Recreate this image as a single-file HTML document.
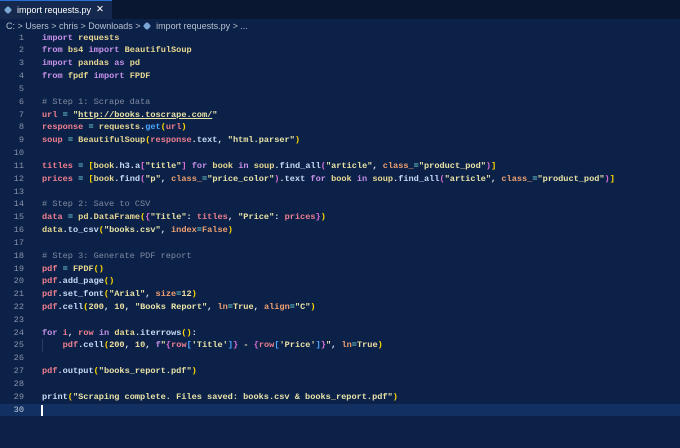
<!DOCTYPE html>
<html><head><meta charset="utf-8"><style>
*{margin:0;padding:0;box-sizing:border-box}
body{width:680px;height:448px;background:#0c2148;overflow:hidden;font-family:"Liberation Sans",sans-serif;position:relative}
.tabbar{position:absolute;left:0;top:0;width:680px;height:19px;background:#0a1730}
.tab{position:absolute;left:0;top:0;width:112px;height:19px;background:#15284d;color:#fff;font-size:9px;line-height:18px;padding-left:17px;border-top:1px solid #2a6fd6;white-space:nowrap}
.tab .x{position:absolute;left:96px;top:0;font-size:9.5px}
.dot{position:absolute;width:6px;height:6px;background:#7aa6d6;transform:rotate(45deg);border-radius:2px}
.idot{display:inline-block;width:6px;height:6px;background:#7aa6d6;transform:rotate(45deg);border-radius:2px;margin:0 4px 0 3px;vertical-align:0px}
.crumb{position:absolute;left:6px;top:19px;height:15px;line-height:15px;font-size:9px;color:#b7c0d0;white-space:pre}
.code{position:absolute;left:0;top:31.6px;width:680px;font-family:"Liberation Mono",monospace;font-size:8.6px;font-weight:bold}
.l{height:12.83px;line-height:12.83px;white-space:pre;position:relative}
.n{position:absolute;left:0;width:24px;text-align:right;color:#8892a8;font-weight:normal}
.t{position:absolute;left:42px;color:#e8eaf0}
.cur{background:#123062}
.k{color:#c792ea}.v{color:#f07f8e}.c{color:#e8d892}.s{color:#e9e3a8}.o{color:#6fd0d0}.m{color:#c7dcf7}
.p{color:#f0a070}.g{color:#7f8aa0;font-weight:normal}.y{color:#ffd700}.q{color:#da70d6}.b{color:#4aa8ff}.nu{color:#f0e0a0}.u{text-decoration:underline}
</style></head><body>
<div class="tabbar"><div class="tab"><span class="dot" style="left:5px;top:6px"></span>import requests.py<span class="x">✕</span></div></div>
<div class="crumb">C: &gt; Users &gt; chris &gt; Downloads &gt;<span class="idot"></span> import requests.py &gt; ...</div>
<div class="code">
<div class="l"><span class="n">1</span><span class="t"><span class="k">import</span> <span class="c">requests</span></span></div>
<div class="l"><span class="n">2</span><span class="t"><span class="k">from</span> <span class="c">bs4</span> <span class="k">import</span> <span class="c">BeautifulSoup</span></span></div>
<div class="l"><span class="n">3</span><span class="t"><span class="k">import</span> <span class="c">pandas</span> <span class="k">as</span> <span class="c">pd</span></span></div>
<div class="l"><span class="n">4</span><span class="t"><span class="k">from</span> <span class="c">fpdf</span> <span class="k">import</span> <span class="c">FPDF</span></span></div>
<div class="l"><span class="n">5</span></div>
<div class="l"><span class="n">6</span><span class="t g"># Step 1: Scrape data</span></div>
<div class="l"><span class="n">7</span><span class="t"><span class="v">url</span> <span class="o">=</span> <span class="s">"<span class="u">http://books.toscrape.com/</span>"</span></span></div>
<div class="l"><span class="n">8</span><span class="t"><span class="v">response</span> <span class="o">=</span> <span class="c">requests</span>.<span class="b">get</span><span class="y">(</span><span class="v">url</span><span class="y">)</span></span></div>
<div class="l"><span class="n">9</span><span class="t"><span class="v">soup</span> <span class="o">=</span> <span class="c">BeautifulSoup</span><span class="y">(</span><span class="v">response</span>.<span class="m">text</span>, <span class="s">"html.parser"</span><span class="y">)</span></span></div>
<div class="l"><span class="n">10</span></div>
<div class="l"><span class="n">11</span><span class="t"><span class="v">titles</span> <span class="o">=</span> <span class="y">[</span><span class="c">book</span>.<span class="m">h3</span>.<span class="m">a</span><span class="q">[</span><span class="s">"title"</span><span class="q">]</span> <span class="k">for</span> <span class="c">book</span> <span class="k">in</span> <span class="c">soup</span>.<span class="m">find_all</span><span class="q">(</span><span class="s">"article"</span>, <span class="p">class_</span><span class="o">=</span><span class="s">"product_pod"</span><span class="q">)</span><span class="y">]</span></span></div>
<div class="l"><span class="n">12</span><span class="t"><span class="v">prices</span> <span class="o">=</span> <span class="y">[</span><span class="c">book</span>.<span class="m">find</span><span class="q">(</span><span class="s">"p"</span>, <span class="p">class_</span><span class="o">=</span><span class="s">"price_color"</span><span class="q">)</span>.<span class="m">text</span> <span class="k">for</span> <span class="c">book</span> <span class="k">in</span> <span class="c">soup</span>.<span class="m">find_all</span><span class="q">(</span><span class="s">"article"</span>, <span class="p">class_</span><span class="o">=</span><span class="s">"product_pod"</span><span class="q">)</span><span class="y">]</span></span></div>
<div class="l"><span class="n">13</span></div>
<div class="l"><span class="n">14</span><span class="t g"># Step 2: Save to CSV</span></div>
<div class="l"><span class="n">15</span><span class="t"><span class="v">data</span> <span class="o">=</span> <span class="c">pd</span>.<span class="c">DataFrame</span><span class="y">(</span><span class="q">{</span><span class="s">"Title"</span>: <span class="v">titles</span>, <span class="s">"Price"</span>: <span class="v">prices</span><span class="q">}</span><span class="y">)</span></span></div>
<div class="l"><span class="n">16</span><span class="t"><span class="c">data</span>.<span class="m">to_csv</span><span class="y">(</span><span class="s">"books.csv"</span>, <span class="p">index</span><span class="o">=</span><span class="p">False</span><span class="y">)</span></span></div>
<div class="l"><span class="n">17</span></div>
<div class="l"><span class="n">18</span><span class="t g"># Step 3: Generate PDF report</span></div>
<div class="l"><span class="n">19</span><span class="t"><span class="v">pdf</span> <span class="o">=</span> <span class="c">FPDF</span><span class="y">()</span></span></div>
<div class="l"><span class="n">20</span><span class="t"><span class="v">pdf</span>.<span class="m">add_page</span><span class="y">()</span></span></div>
<div class="l"><span class="n">21</span><span class="t"><span class="v">pdf</span>.<span class="m">set_font</span><span class="y">(</span><span class="s">"Arial"</span>, <span class="p">size</span><span class="o">=</span><span class="nu">12</span><span class="y">)</span></span></div>
<div class="l"><span class="n">22</span><span class="t"><span class="v">pdf</span>.<span class="m">cell</span><span class="y">(</span><span class="nu">200</span>, <span class="nu">10</span>, <span class="s">"Books Report"</span>, <span class="p">ln</span><span class="o">=</span><span class="nu">True</span>, <span class="p">align</span><span class="o">=</span><span class="s">"C"</span><span class="y">)</span></span></div>
<div class="l"><span class="n">23</span></div>
<div class="l"><span class="n">24</span><span class="t"><span class="k">for</span> <span class="v">i</span>, <span class="v">row</span> <span class="k">in</span> <span class="c">data</span>.<span class="m">iterrows</span><span class="y">()</span>:</span></div>
<div class="l"><span class="n">25</span><span style="position:absolute;left:42px;top:0;width:1px;height:12.83px;background:#2a3c60"></span><span class="t">    <span class="v">pdf</span>.<span class="m">cell</span><span class="y">(</span><span class="nu">200</span>, <span class="nu">10</span>, <span class="k">f</span><span class="s">"</span><span class="q">{</span><span class="v">row</span><span class="b">[</span><span class="s">'Title'</span><span class="b">]</span><span class="q">}</span><span class="s"> - </span><span class="q">{</span><span class="v">row</span><span class="b">[</span><span class="s">'Price'</span><span class="b">]</span><span class="q">}</span><span class="s">"</span>, <span class="p">ln</span><span class="o">=</span><span class="nu">True</span><span class="y">)</span></span></div>
<div class="l"><span class="n">26</span></div>
<div class="l"><span class="n">27</span><span class="t"><span class="v">pdf</span>.<span class="m">output</span><span class="y">(</span><span class="s">"books_report.pdf"</span><span class="y">)</span></span></div>
<div class="l"><span class="n">28</span></div>
<div class="l"><span class="n">29</span><span class="t"><span class="m">print</span><span class="y">(</span><span class="s">"Scraping complete. Files saved: books.csv &amp; books_report.pdf"</span><span class="y">)</span></span></div>
<div class="l cur"><span class="n" style="color:#c8d0e0">30</span><span style="position:absolute;left:41px;top:1px;width:1.5px;height:11px;background:#fff"></span></div>
</div>
</body></html>
